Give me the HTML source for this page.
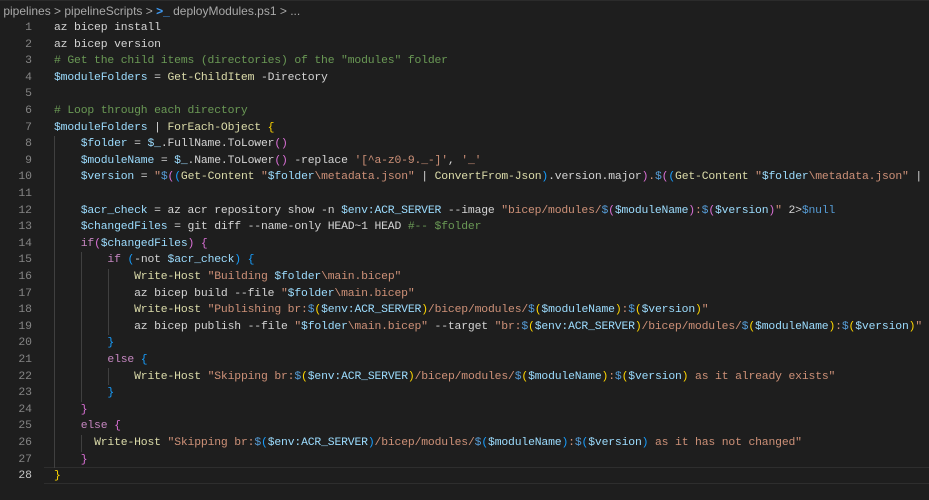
<!DOCTYPE html>
<html><head><meta charset="utf-8"><style>
html,body{margin:0;padding:0;background:#1e1e1e;width:929px;height:500px;overflow:hidden}
.bc{position:absolute;left:0;top:0;width:929px;height:20px;font:12px "Liberation Sans",sans-serif;color:#a9a9a9;line-height:20px;white-space:pre;border-top:1px solid #2b2b2b;box-sizing:border-box}
.bc .ic{color:#3f9cf5;font-weight:bold}
.ln{position:absolute;left:0;width:32px;text-align:right;color:#858585;font:11.4px "Liberation Mono",monospace;height:16.6px;line-height:16.6px}
.cd{position:absolute;left:54px;width:875px;overflow:hidden;white-space:pre;color:#d4d4d4;font:11.4px "Liberation Mono",monospace;letter-spacing:-0.16px;height:16.6px;line-height:16.6px}
.v{color:#9cdcfe}.f{color:#dcdcaa}.s{color:#ce9178}.c{color:#6a9955}.k{color:#c586c0}.n{color:#569cd6}
.b1{color:#ffd700}.b2{color:#da70d6}.b3{color:#179fff}
.g{position:absolute;width:1px;background:#404040}
.cur{position:absolute;left:44px;width:885px;top:467px;height:17px;border-top:1px solid #2e2e2e;border-bottom:1px solid #2e2e2e;box-sizing:border-box}
</style></head><body>
<div class="bc"> pipelines &gt; pipelineScripts &gt; <span class="ic">&gt;_</span> deployModules.ps1 &gt; ...</div>
<div class="cur"></div>
<div class="g" style="left:54px;top:136px;height:332px"></div>
<div class="g" style="left:81px;top:252px;height:150px"></div>
<div class="g" style="left:108px;top:269px;height:66px"></div>
<div class="g" style="left:108px;top:368px;height:17px"></div>
<div class="g" style="left:81px;top:435px;height:17px"></div>
<div id="c"></div>
<script>
var L=[
'az bicep install',
'az bicep version',
'<span class="c"># Get the child items (directories) of the "modules" folder</span>',
'<span class="v">$moduleFolders</span> = <span class="f">Get-ChildItem</span> -Directory',
'',
'<span class="c"># Loop through each directory</span>',
'<span class="v">$moduleFolders</span> | <span class="f">ForEach-Object</span> <span class="b1">{</span>',
'    <span class="v">$folder</span> = <span class="v">$_</span>.FullName.ToLower<span class="b2">()</span>',
'    <span class="v">$moduleName</span> = <span class="v">$_</span>.Name.ToLower<span class="b2">()</span> -replace <span class="s">\'[^a-z0-9._-]\'</span>, <span class="s">\'_\'</span>',
'    <span class="v">$version</span> = <span class="s">"</span><span class="n">$</span><span class="b2">(</span><span class="b3">(</span><span class="f">Get-Content</span> <span class="s">"</span><span class="v">$folder</span><span class="s">\\metadata.json"</span> | <span class="f">ConvertFrom-Json</span><span class="b3">)</span>.version.major<span class="b2">)</span><span class="s">.</span><span class="n">$</span><span class="b2">(</span><span class="b3">(</span><span class="f">Get-Content</span> <span class="s">"</span><span class="v">$folder</span><span class="s">\\metadata.json"</span> | <span class="f">ConvertFrom-Json</span>',
'',
'    <span class="v">$acr_check</span> = az acr repository show -n <span class="v">$env:ACR_SERVER</span> --image <span class="s">"bicep/modules/</span><span class="n">$</span><span class="b2">(</span><span class="v">$moduleName</span><span class="b2">)</span><span class="s">:</span><span class="n">$</span><span class="b2">(</span><span class="v">$version</span><span class="b2">)</span><span class="s">"</span> 2&gt;<span class="n">$null</span>',
'    <span class="v">$changedFiles</span> = git diff --name-only HEAD~1 HEAD <span class="c">#-- $folder</span>',
'    <span class="k">if</span><span class="b2">(</span><span class="v">$changedFiles</span><span class="b2">)</span> <span class="b2">{</span>',
'        <span class="k">if</span> <span class="b3">(</span>-not <span class="v">$acr_check</span><span class="b3">)</span> <span class="b3">{</span>',
'            <span class="f">Write-Host</span> <span class="s">"Building </span><span class="v">$folder</span><span class="s">\\main.bicep"</span>',
'            az bicep build --file <span class="s">"</span><span class="v">$folder</span><span class="s">\\main.bicep"</span>',
'            <span class="f">Write-Host</span> <span class="s">"Publishing br:</span><span class="n">$</span><span class="b1">(</span><span class="v">$env:ACR_SERVER</span><span class="b1">)</span><span class="s">/bicep/modules/</span><span class="n">$</span><span class="b1">(</span><span class="v">$moduleName</span><span class="b1">)</span><span class="s">:</span><span class="n">$</span><span class="b1">(</span><span class="v">$version</span><span class="b1">)</span><span class="s">"</span>',
'            az bicep publish --file <span class="s">"</span><span class="v">$folder</span><span class="s">\\main.bicep"</span> --target <span class="s">"br:</span><span class="n">$</span><span class="b1">(</span><span class="v">$env:ACR_SERVER</span><span class="b1">)</span><span class="s">/bicep/modules/</span><span class="n">$</span><span class="b1">(</span><span class="v">$moduleName</span><span class="b1">)</span><span class="s">:</span><span class="n">$</span><span class="b1">(</span><span class="v">$version</span><span class="b1">)</span><span class="s">"</span>',
'        <span class="b3">}</span>',
'        <span class="k">else</span> <span class="b3">{</span>',
'            <span class="f">Write-Host</span> <span class="s">"Skipping br:</span><span class="n">$</span><span class="b1">(</span><span class="v">$env:ACR_SERVER</span><span class="b1">)</span><span class="s">/bicep/modules/</span><span class="n">$</span><span class="b1">(</span><span class="v">$moduleName</span><span class="b1">)</span><span class="s">:</span><span class="n">$</span><span class="b1">(</span><span class="v">$version</span><span class="b1">)</span><span class="s"> as it already exists"</span>',
'        <span class="b3">}</span>',
'    <span class="b2">}</span>',
'    <span class="k">else</span> <span class="b2">{</span>',
'      <span class="f">Write-Host</span> <span class="s">"Skipping br:</span><span class="n">$</span><span class="b3">(</span><span class="v">$env:ACR_SERVER</span><span class="b3">)</span><span class="s">/bicep/modules/</span><span class="n">$</span><span class="b3">(</span><span class="v">$moduleName</span><span class="b3">)</span><span class="s">:</span><span class="n">$</span><span class="b3">(</span><span class="v">$version</span><span class="b3">)</span><span class="s"> as it has not changed"</span>',
'    <span class="b2">}</span>',
'<span class="b1">}</span>'
];
var h='';
for(var i=0;i<L.length;i++){var t=(20+i*16.6).toFixed(1);
h+='<div class="ln" style="top:'+t+'px'+(i==27?';color:#c6c6c6':'')+'">'+(i+1)+'</div><div class="cd" style="top:'+t+'px">'+L[i]+'</div>';}
document.getElementById('c').innerHTML=h;
</script>
</body></html>
